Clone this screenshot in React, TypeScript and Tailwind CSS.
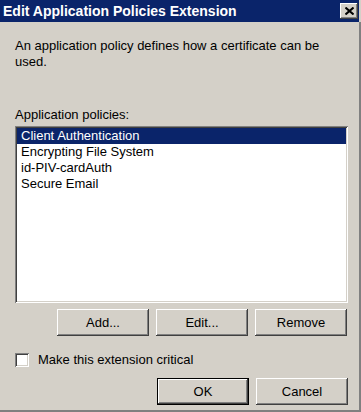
const bevel =
  "shadow-[inset_-1px_-1px_#404040,inset_1px_1px_#ffffff,inset_-2px_-2px_#808080,inset_2px_2px_#d4d0c8]";

function Button({ label, primary }: { label: string; primary?: boolean }) {
  return (
    <button
      type="button"
      className={
        primary
          ? "flex h-[27px] w-[92px] items-center justify-center border border-black bg-[#d4d0c8] text-black shadow-[inset_-1px_-1px_#404040,inset_1px_1px_#ffffff,inset_-2px_-2px_#808080]"
          : `flex h-[27px] w-[92px] items-center justify-center bg-[#d4d0c8] text-black ${bevel}`
      }
    >
      {label}
    </button>
  );
}

const policies = [
  "Client Authentication",
  "Encrypting File System",
  "id-PIV-cardAuth",
  "Secure Email",
];

export default function App() {
  return (
    <div
      className="flex h-[412px] w-[361px] flex-col bg-[#d4d0c8] text-[13px] leading-[16px] text-black"
      style={{ fontFamily: '"Liberation Sans", Arial, sans-serif' }}
    >
      {/* Title bar */}
      <div className="mr-[2px] flex h-[22px] items-center justify-between bg-[#0a246a] pl-[3px] pr-[1px]">
        <span className="text-[14px] font-bold leading-[22px] text-white">
          Edit Application Policies Extension
        </span>
        <button
          type="button"
          className={`flex h-[16px] w-[18px] items-center justify-center bg-[#d4d0c8] ${bevel}`}
        >
          <svg width="9" height="8" viewBox="0 0 9 8">
            <path d="M0.5 0.5L8.5 7.5M8.5 0.5L0.5 7.5" stroke="#000" strokeWidth="2" />
          </svg>
        </button>
      </div>

      <div className="flex flex-1 flex-col border-r-2 border-b-2 border-r-[#808080] border-b-[#808080] pl-[15px] pr-[11px]">
        <p className="mt-[16px] whitespace-nowrap">
          An application policy defines how a certificate can be
          <br />
          used.
        </p>

        <p className="mt-[37px]">Application policies:</p>

        {/* List box */}
        <div className="mt-[3px] h-[177px] bg-white p-[2px] shadow-[inset_1px_1px_#808080,inset_-1px_-1px_#ffffff,inset_2px_2px_#404040,inset_-2px_-2px_#d4d0c8]">
          {policies.map((p, i) => (
            <div
              key={p}
              className={
                i === 0
                  ? "h-[16px] bg-[#0a246a] pl-[4px] text-white"
                  : "h-[16px] pl-[4px] text-black"
              }
            >
              {p}
            </div>
          ))}
        </div>

        <div className="mt-[6px] flex justify-end gap-[7px] pr-[1px]">
          <Button label="Add..." />
          <Button label="Edit..." />
          <Button label="Remove" />
        </div>

        <label className="mt-[16px] flex items-center gap-[9px]">
          <span className="h-[14px] w-[14px] bg-white shadow-[inset_1px_1px_#808080,inset_-1px_-1px_#ffffff,inset_2px_2px_#404040,inset_-2px_-2px_#d4d0c8]" />
          <span>Make this extension critical</span>
        </label>

        <div className="mt-[10px] flex justify-end gap-[7px]">
          <Button label="OK" primary />
          <Button label="Cancel" />
        </div>
      </div>
    </div>
  );
}
